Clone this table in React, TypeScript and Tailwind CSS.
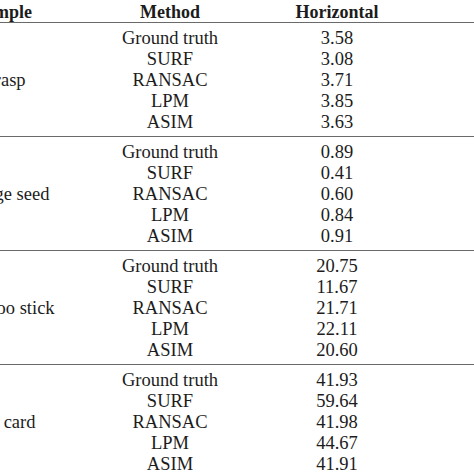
const groups = [
  { sample: "Grasp", shift: "", values: ["3.58", "3.08", "3.71", "3.85", "3.63"] },
  { sample: "Orange seed", shift: "", values: ["0.89", "0.41", "0.60", "0.84", "0.91"] },
  { sample: "Bamboo stick", shift: "", values: ["20.75", "11.67", "21.71", "22.11", "20.60"] },
  { sample: "ID card", shift: "pl-[8px]", values: ["41.93", "59.64", "41.98", "44.67", "41.91"] },
];

const methods = ["Ground truth", "SURF", "RANSAC", "LPM", "ASIM"];

const App = () => {
  return (
    <div className="w-[474px] h-[474px] overflow-hidden bg-white text-[#1c1c1c] text-[18.5px] leading-none font-['Liberation_Serif','Times_New_Roman',serif]">
      <div className="ml-[-77px] w-[640px]">
        {/* header */}
        <div className="flex h-[22px] items-center pt-[1px] font-bold text-[18px]">
          <div className="w-[161px] text-center">Sample</div>
          <div className="w-[172px] text-center">Method</div>
          <div className="w-[162px] text-center">Horizontal</div>
        </div>

        {groups.map((g) => (
          <div key={g.sample} className="flex border-t border-[#6a6a6a] pt-[5px] pb-[3px]">
            <div className={`w-[161px] flex items-center justify-center ${g.shift}`}>{g.sample}</div>
            <div className="flex flex-col">
              {methods.map((m, i) => (
                <div key={m} className="flex h-[21px] items-center">
                  <div className="w-[172px] text-center">{m}</div>
                  <div className="w-[162px] text-center">{g.values[i]}</div>
                </div>
              ))}
            </div>
          </div>
        ))}
      </div>
    </div>
  );
};

export default App;
